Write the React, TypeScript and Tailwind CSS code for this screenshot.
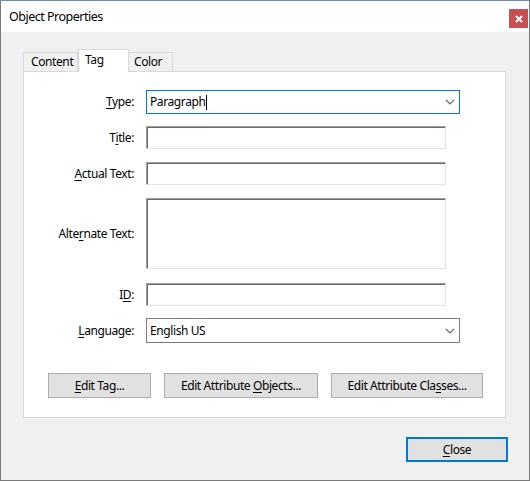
const font = { fontFamily: '"Noto Sans", "Liberation Sans", sans-serif' };

function U({ children }: { children: string }) {
  return <span className="underline underline-offset-2">{children}</span>;
}

function Chevron() {
  return (
    <svg width="10" height="6" viewBox="0 0 10 6" className="shrink-0">
      <path d="M1 1 L5 5 L9 1" fill="none" stroke="#606060" strokeWidth="1.1" />
    </svg>
  );
}

function Sunken({ w, h }: { w: string; h: string }) {
  return (
    <div
      className={`${w} ${h} bg-white border border-t-[#a0a0a0] border-l-[#a0a0a0] border-r-[#e3e3e3] border-b-[#e3e3e3] shadow-[inset_1px_1px_0_#696969]`}
    />
  );
}

function Row({
  label,
  mt,
  children,
}: {
  label: React.ReactNode;
  mt: string;
  children: React.ReactNode;
}) {
  return (
    <div className={`flex items-center gap-[12px] ${mt}`}>
      <div className="w-[110px] text-right leading-none">{label}</div>
      {children}
    </div>
  );
}

export default function App() {
  return (
    <div
      className="w-[530px] h-[481px] flex flex-col border border-[#7a7a7a] border-t-[#6b8cb5] bg-[#f0f0f0] text-[12px] tracking-[-0.4px] text-black"
      style={font}
    >
      {/* title bar */}
      <div className="h-[31px] bg-white flex items-start justify-between pl-[8px] pr-px">
        <span className="mt-[7px] text-[12.5px] tracking-[-0.5px]">Object Properties</span>
        <button className="mt-[8px] w-[19px] h-[19px] bg-[#c75050] flex items-center justify-center">
          <svg width="8" height="8" viewBox="0 0 8 8">
            <path d="M1 1 L7 7 M7 1 L1 7" stroke="white" strokeWidth="2" />
          </svg>
        </button>
      </div>

      <div className="flex-1 flex flex-col pt-[17px] pl-[22px] pr-[21px]">
        {/* tabs */}
        <div className="flex items-end h-[22px]">
          <div className="w-[55px] h-[19px] border border-b-0 border-[#d9d9d9] flex items-center pl-[7px]">
            Content
          </div>
          <div className="relative z-10 -mb-px w-[51px] h-[23px] bg-white border border-b-0 border-[#d9d9d9] pl-[6px] pt-[1px]">
            Tag
          </div>
          <div className="-ml-px w-[45px] h-[19px] border border-b-0 border-[#d9d9d9] flex items-center pl-[5px]">
            Color
          </div>
        </div>

        {/* panel */}
        <div className="w-[483px] h-[347px] bg-white border border-[#d9d9d9] flex flex-col">
          <Row label={<><U>T</U>ype:</>} mt="mt-[18px]">
            <div className="w-[314px] h-[24px] border border-[#0078d7] flex items-center justify-between pl-[3px] pr-[4px]">
              <span className="flex items-center">
                Paragraph<span className="inline-block w-px h-[15px] bg-black ml-px" />
              </span>
              <Chevron />
            </div>
          </Row>
          <Row label={<>T<U>i</U>tle:</>} mt="mt-[12px]">
            <Sunken w="w-[300px]" h="h-[23px]" />
          </Row>
          <Row label={<><U>A</U>ctual Text:</>} mt="mt-[13px]">
            <Sunken w="w-[300px]" h="h-[23px]" />
          </Row>
          <Row label={<>Alte<U>r</U>nate Text:</>} mt="mt-[13px]">
            <Sunken w="w-[300px]" h="h-[71px]" />
          </Row>
          <Row label={<>I<U>D</U>:</>} mt="mt-[14px]">
            <Sunken w="w-[300px]" h="h-[23px]" />
          </Row>
          <Row label={<><U>L</U>anguage:</>} mt="mt-[12px]">
            <div className="w-[314px] h-[25px] border border-[#7a7a7a] flex items-center justify-between pl-[3px] pr-[4px]">
              <span>English US</span>
              <Chevron />
            </div>
          </Row>

          <div className="flex gap-[13px] pl-[24px] mt-[30px]">
            <button className="w-[103px] h-[25px] bg-[#e1e1e1] border border-[#adadad]">
              <U>E</U>dit Tag...
            </button>
            <button className="w-[154px] h-[25px] bg-[#e1e1e1] border border-[#adadad]">
              Edit Attribute <U>O</U>bjects...
            </button>
            <button className="w-[152px] h-[25px] bg-[#e1e1e1] border border-[#adadad]">
              Edit Attribute Cla<U>s</U>ses...
            </button>
          </div>
        </div>

        <div className="flex justify-end mt-[19px]">
          <button className="w-[102px] h-[25px] bg-[#e1e1e1] border-2 border-[#0078d7]">
            <U>C</U>lose
          </button>
        </div>
      </div>
    </div>
  );
}
